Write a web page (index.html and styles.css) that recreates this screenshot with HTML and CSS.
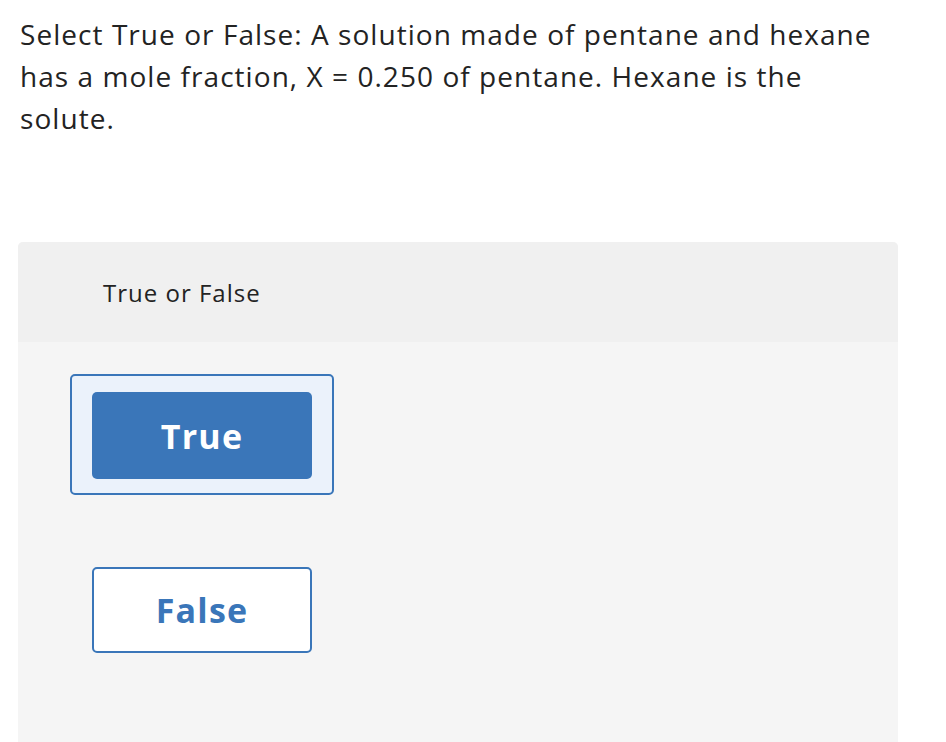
FILE: index.html
```html
<!DOCTYPE html>
<html>
<head>
<meta charset="utf-8">
<link rel="stylesheet" href="styles.css">
</head>
<body>
<div class="page">
  <p class="question">Select True or False: A solution made of pentane and hexane has a mole fraction, X = 0.250 of pentane. Hexane is the solute.</p>
  <div class="panel">
    <div class="panel-head">True or False</div>
    <div class="panel-body">
      <div class="choice selected"><button class="btn btn-true">True</button></div>
      <div class="choice"><button class="btn btn-false">False</button></div>
    </div>
  </div>
</div>
</body>
</html>
```
FILE: styles.css
```css
html, body {
  margin: 0;
  padding: 0;
  background: #ffffff;
}
.page {
  padding: 0 48px 0 18px;
  font-family: "Open Sans", Lato, sans-serif;
  color: #232323;
}
.question {
  margin: 0;
  padding: 13px 0 0 2px;
  font-size: 28px;
  letter-spacing: 1.05px;
  line-height: 42px;
  width: 876px;
}
.panel {
  margin-top: 103px;
  width: 880px;
  border-radius: 5px 5px 0 0;
  overflow: hidden;
  background: #f5f5f5;
}
.panel-head {
  height: 100px;
  background: #f0f0f0;
  display: flex;
  align-items: center;
  padding-left: 85px;
  font-size: 24px;
  letter-spacing: 1px;
  color: #232323;
}
.panel-body {
  padding: 32px 0 100px 52px;
  display: flex;
  flex-direction: column;
  align-items: flex-start;
  gap: 54px;
}
.choice {
  border: 2px solid transparent;
  border-radius: 5px;
  padding: 16px 20px 14px 20px;
}
.choice.selected {
  border-color: #3a76b9;
  background: #ebf2fb;
}
.btn {
  width: 220px;
  height: 87px;
  border-radius: 5px;
  font-family: "Open Sans", Lato, sans-serif;
  font-weight: 700;
  font-size: 34px;
  letter-spacing: 1.2px;
  display: block;
  cursor: pointer;
  padding: 0;
}
.btn-true {
  background: #3a76b9;
  color: #ffffff;
  border: none;
}
.btn-false {
  background: #ffffff;
  color: #3a76b9;
  border: 2px solid #3a76b9;
  height: 86px;
}
```
